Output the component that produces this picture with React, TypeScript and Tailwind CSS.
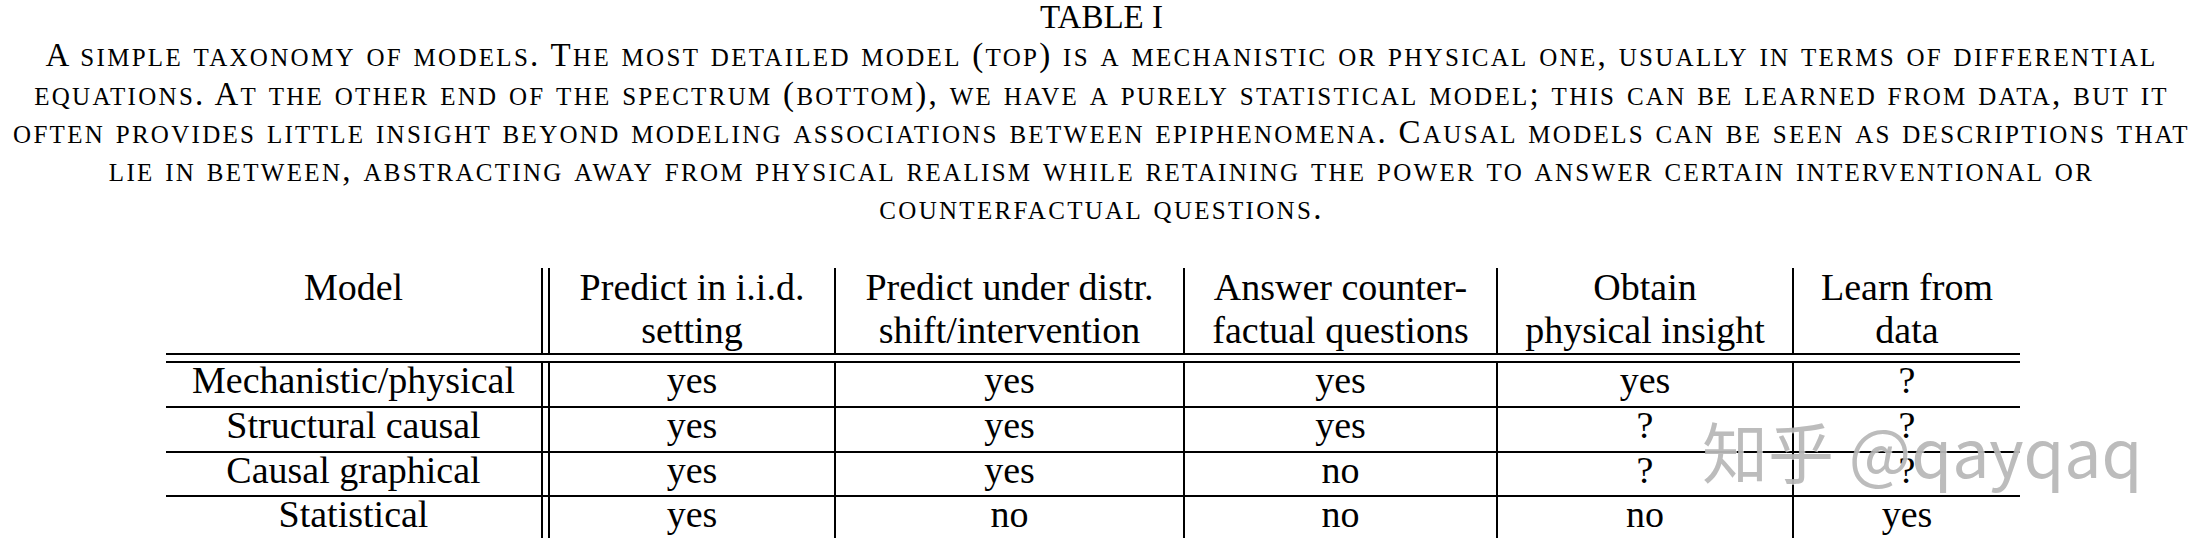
const caption = [
  "A simple taxonomy of models. The most detailed model (top) is a mechanistic or physical one, usually in terms of differential",
  "equations. At the other end of the spectrum (bottom), we have a purely statistical model; this can be learned from data, but it",
  "often provides little insight beyond modeling associations between epiphenomena. Causal models can be seen as descriptions that",
  "lie in between, abstracting away from physical realism while retaining the power to answer certain interventional or",
  "counterfactual questions.",
];

const header = [
  ["Model"],
  ["Predict in i.i.d.", "setting"],
  ["Predict under distr.", "shift/intervention"],
  ["Answer counter-", "factual questions"],
  ["Obtain", "physical insight"],
  ["Learn from", "data"],
];

const rows = [
  { h: "h-[43px]", cells: ["Mechanistic/physical", "yes", "yes", "yes", "yes", "?"] },
  { h: "h-[43px]", cells: ["Structural causal", "yes", "yes", "yes", "?", "?"] },
  { h: "h-[42px]", cells: ["Causal graphical", "yes", "yes", "no", "?", "?"] },
  { h: "h-[41px]", cells: ["Statistical", "yes", "no", "no", "no", "yes"] },
];

// widths include the rule lines, measured off the reference
const cellCls = [
  "w-[377px] border-r-2 border-black",
  "w-[288px] border-x-2 border-black",
  "w-[349px] border-r-2 border-black",
  "w-[313px] border-r-2 border-black",
  "w-[296px] border-r-2 border-black",
  "w-[226px]",
];

// fake small caps: lowercase runs drawn as smaller capitals, a bit tracked
function SmallCaps({ text }: { text: string }) {
  const parts = text.split(/([a-z]+)/);
  return (
    <>
      {parts.map((p, i) =>
        /^[a-z]+$/.test(p) ? (
          <span key={i} className="text-[25px] leading-none uppercase tracking-[2.3px]">
            {p}
          </span>
        ) : (
          <span key={i} className="leading-none tracking-[2.3px]">{p}</span>
        )
      )}
    </>
  );
}

function Row({ cells, h, head }: { cells: string[][]; h: string; head?: boolean }) {
  return (
    <div className={`flex ${h}`}>
      {cells.map((lines, i) => (
        <div key={i} className="contents">
          {i === 1 && <div className="w-[5px] shrink-0" />}
          <div className={`${cellCls[i]} shrink-0 text-center`}>
            <div className={head ? "-mt-[2px] leading-[43px]" : "leading-[34px]"}>
              {lines.map((l, j) => (
                <div key={j} className="whitespace-nowrap">
                  {l}
                </div>
              ))}
            </div>
          </div>
        </div>
      ))}
    </div>
  );
}

const Rule = () => <div className="h-[2px] w-[1854px] bg-black" />;

export default function App() {
  return (
    <div className="relative h-[558px] w-[2203px] overflow-hidden bg-white text-black font-['Liberation_Serif','Times_New_Roman',serif]">
      <div className="-mt-[2px] text-center text-[33px] leading-[38.3px]">
        <div>TABLE I</div>
        {caption.map((line, i) => (
          <div key={i} className="h-[38.3px] whitespace-nowrap">
            <SmallCaps text={line} />
          </div>
        ))}
      </div>

      <div className="mt-[40px] pl-[166px] text-[38px]">
        <Row cells={header} h="h-[85px]" head />
        <Rule />
        <div className="h-[6px]" />
        <Rule />
        {rows.map((r, i) => (
          <div key={i}>
            <Row cells={r.cells.map((c) => [c])} h={r.h} />
            {i < rows.length - 1 && <Rule />}
          </div>
        ))}
      </div>

      {/* zhihu watermark */}
      <div className="absolute left-[1702px] top-[416px] whitespace-nowrap text-[66px] leading-none text-[#b0b0b0]/85 font-['Noto_Sans_CJK_SC','Noto_Sans',sans-serif] [text-shadow:1px_1px_0_rgba(255,255,255,0.6)]">
        知乎 @qayqaq
      </div>
    </div>
  );
}
